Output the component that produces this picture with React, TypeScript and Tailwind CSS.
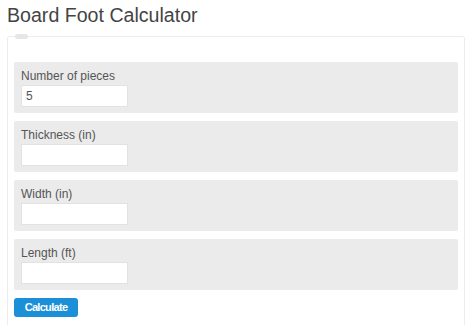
import React from "react";

const fields = [
  { id: "pieces", label: "Number of pieces", value: "5" },
  { id: "thickness", label: "Thickness (in)", value: "" },
  { id: "width", label: "Width (in)", value: "" },
  { id: "length", label: "Length (ft)", value: "" },
];

export default function App() {
  return (
    <div className="w-[474px] h-[325px] overflow-hidden bg-white font-['Liberation_Sans',Arial,sans-serif]">
      <h1 className="pl-[7px] pt-[3px] text-[19.6px] leading-[24px] text-[#444]">
        Board Foot Calculator
      </h1>
      <div className="relative ml-[7px] mt-[9px] w-[458px] h-[300px] border border-[#ededed] rounded-[2px] px-[6px] pt-[25px]">
        <div className="absolute left-[7px] top-[-3px] w-[13px] h-[5px] rounded-full bg-[#e6e6e6]" />
        <div className="flex flex-col gap-[8px]">
          {fields.map((f) => (
            <div
              key={f.id}
              className="bg-[#ebebeb] rounded-[2px] pl-[7px] pt-[7px] pb-[6px]"
            >
              <label className="block text-[12px] leading-[14px] text-[#555] mb-[2px]">
                {f.label}
              </label>
              <input
                defaultValue={f.value}
                className="block w-[107px] h-[22px] bg-white border border-[#e2e2e2] px-[4px] text-[12px] text-[#555] outline-none"
              />
            </div>
          ))}
        </div>
        <button className="mt-[8px] w-[64px] h-[19px] rounded-[3px] bg-[#1b8fd8] text-white text-[11px] font-bold tracking-[-0.7px] leading-[19px]">
          Calculate
        </button>
      </div>
    </div>
  );
}
